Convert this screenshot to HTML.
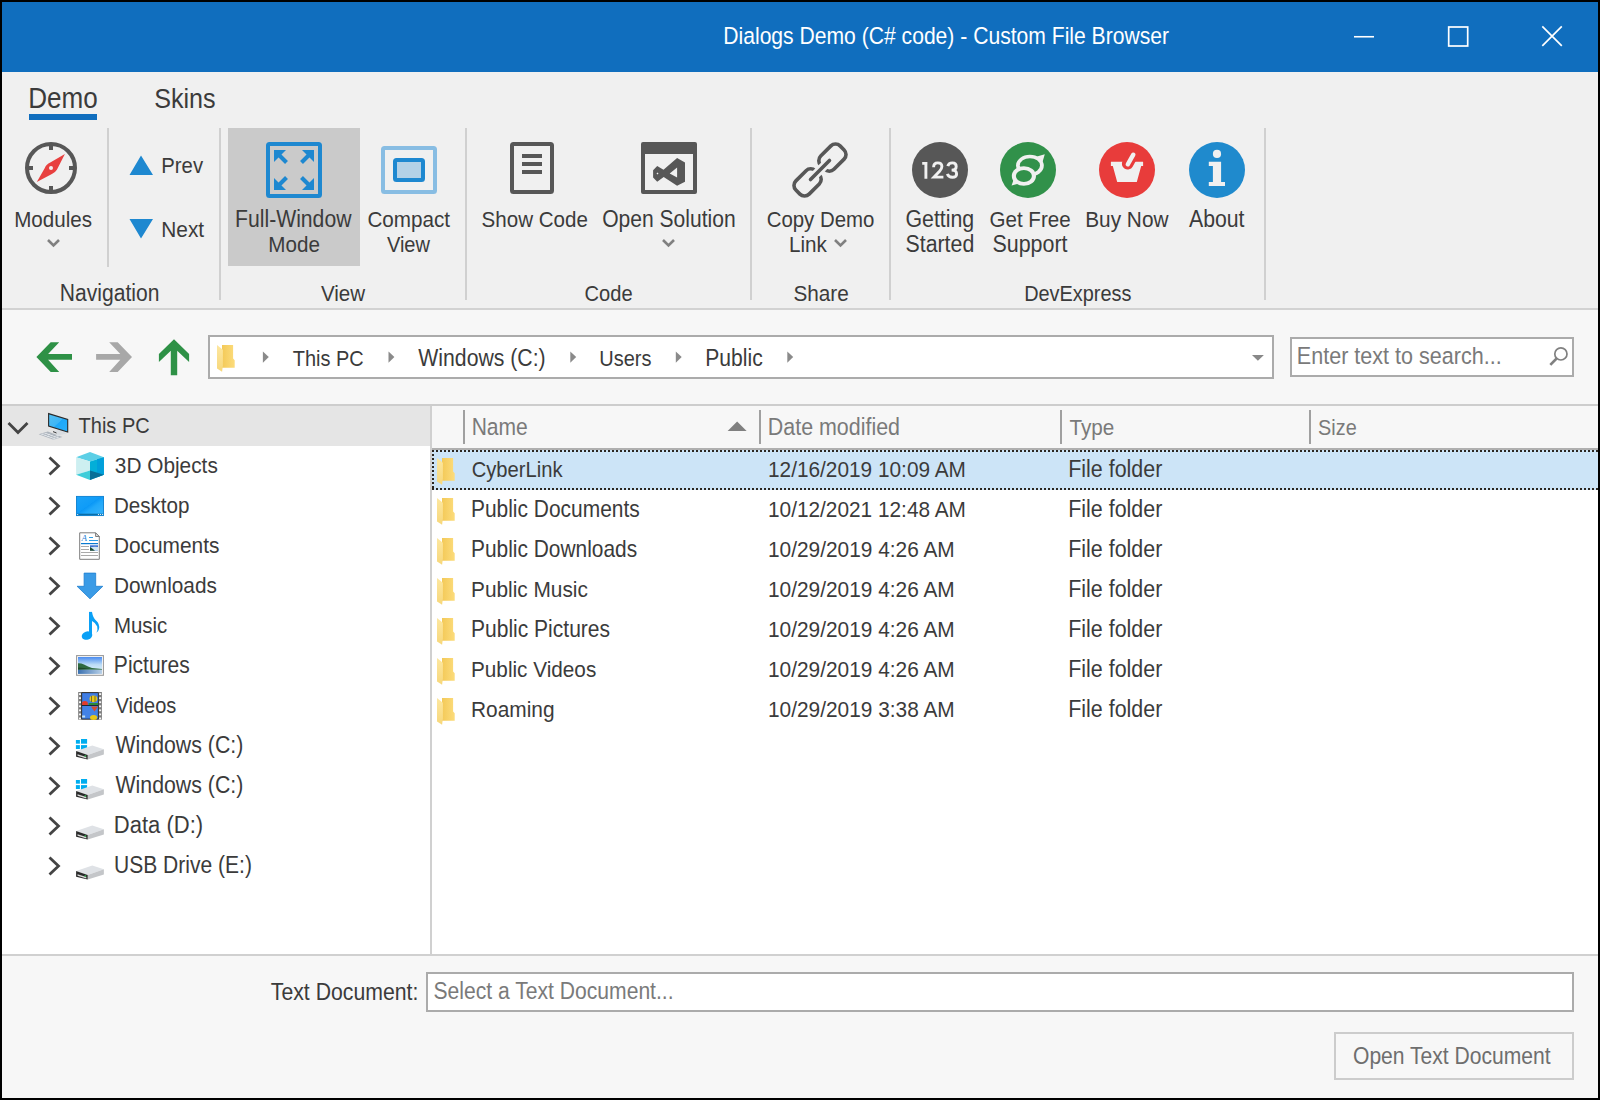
<!DOCTYPE html>
<html><head><meta charset="utf-8"><style>
html,body{margin:0;padding:0;}
body{width:1600px;height:1100px;position:relative;overflow:hidden;background:#000;font-family:"Liberation Sans",sans-serif;}
.t{position:absolute;white-space:nowrap;font-family:"Liberation Sans",sans-serif;}
svg{overflow:visible}
</style></head><body>
<div style="position:absolute;left:2px;top:2px;width:1596px;height:70px;background:#106ebe;"></div>
<div class="t" style="left:723.27px;top:25px;font-size:21.12px;line-height:23px;color:#ffffff;transform:scaleY(1.1);transform-origin:0 19px;">Dialogs Demo (C# code) - Custom File Browser</div>
<div style="position:absolute;left:2px;top:72px;width:1596px;height:236px;background:#f0f0f0;"></div>
<div style="position:absolute;left:2px;top:308px;width:1596px;height:2px;background:#d2d2d2;"></div>
<div class="t" style="left:28.16px;top:84px;font-size:26.07px;line-height:30px;color:#3b3b3b;transform:scaleY(1.1);transform-origin:0 24px;">Demo</div>
<div class="t" style="left:154.16px;top:85px;font-size:25.13px;line-height:28px;color:#3b3b3b;transform:scaleY(1.1);transform-origin:0 23px;">Skins</div>
<div style="position:absolute;left:29px;top:114px;width:68px;height:6px;background:#106ebe;"></div>
<div style="position:absolute;left:107px;top:128px;width:2px;height:139px;background:#d0d0d0;"></div>
<div style="position:absolute;left:219px;top:128px;width:2px;height:172px;background:#d0d0d0;"></div>
<div style="position:absolute;left:465px;top:128px;width:2px;height:172px;background:#d0d0d0;"></div>
<div style="position:absolute;left:750px;top:128px;width:2px;height:172px;background:#d0d0d0;"></div>
<div style="position:absolute;left:889px;top:128px;width:2px;height:172px;background:#d0d0d0;"></div>
<div style="position:absolute;left:1264px;top:128px;width:2px;height:172px;background:#d0d0d0;"></div>
<div style="position:absolute;left:228px;top:128px;width:132px;height:138px;background:#cacaca;"></div>
<div class="t" style="left:14.21px;top:208px;font-size:20.59px;line-height:23px;color:#3b3b3b;transform:scaleY(1.1);transform-origin:0 19px;">Modules</div>
<div class="t" style="left:161.33px;top:155px;font-size:20.30px;line-height:22px;color:#3b3b3b;transform:scaleY(1.1);transform-origin:0 18px;">Prev</div>
<div class="t" style="left:161.29px;top:218px;font-size:20.85px;line-height:23px;color:#3b3b3b;transform:scaleY(1.1);transform-origin:0 19px;">Next</div>
<div class="t" style="left:235.06px;top:208px;font-size:21.16px;line-height:23px;color:#3b3b3b;transform:scaleY(1.1);transform-origin:0 19px;">Full-Window</div>
<div class="t" style="left:268.31px;top:233px;font-size:20.63px;line-height:23px;color:#3b3b3b;transform:scaleY(1.1);transform-origin:0 19px;">Mode</div>
<div class="t" style="left:367.45px;top:208px;font-size:20.67px;line-height:23px;color:#3b3b3b;transform:scaleY(1.1);transform-origin:0 19px;">Compact</div>
<div class="t" style="left:386.91px;top:234px;font-size:20.04px;line-height:22px;color:#3b3b3b;transform:scaleY(1.1);transform-origin:0 18px;">View</div>
<div class="t" style="left:481.57px;top:208px;font-size:20.57px;line-height:23px;color:#3b3b3b;transform:scaleY(1.1);transform-origin:0 19px;">Show Code</div>
<div class="t" style="left:602.20px;top:208px;font-size:21.06px;line-height:23px;color:#3b3b3b;transform:scaleY(1.1);transform-origin:0 19px;">Open Solution</div>
<div class="t" style="left:766.66px;top:209px;font-size:20.42px;line-height:22px;color:#3b3b3b;transform:scaleY(1.1);transform-origin:0 18px;">Copy Demo</div>
<div class="t" style="left:788.90px;top:233px;font-size:20.70px;line-height:23px;color:#3b3b3b;transform:scaleY(1.1);transform-origin:0 19px;">Link</div>
<div class="t" style="left:905.43px;top:208px;font-size:21.35px;line-height:24px;color:#3b3b3b;transform:scaleY(1.1);transform-origin:0 19px;">Getting</div>
<div class="t" style="left:905.53px;top:233px;font-size:21.32px;line-height:24px;color:#3b3b3b;transform:scaleY(1.1);transform-origin:0 19px;">Started</div>
<div class="t" style="left:989.47px;top:208px;font-size:20.57px;line-height:23px;color:#3b3b3b;transform:scaleY(1.1);transform-origin:0 19px;">Get Free</div>
<div class="t" style="left:992.43px;top:233px;font-size:21.45px;line-height:24px;color:#3b3b3b;transform:scaleY(1.1);transform-origin:0 19px;">Support</div>
<div class="t" style="left:1085.19px;top:208px;font-size:20.83px;line-height:23px;color:#3b3b3b;transform:scaleY(1.1);transform-origin:0 19px;">Buy Now</div>
<div class="t" style="left:1188.96px;top:208px;font-size:21.27px;line-height:24px;color:#3b3b3b;transform:scaleY(1.1);transform-origin:0 19px;">About</div>
<div class="t" style="left:59.77px;top:282px;font-size:21.08px;line-height:23px;color:#3b3b3b;transform:scaleY(1.1);transform-origin:0 19px;">Navigation</div>
<div class="t" style="left:320.91px;top:282px;font-size:20.55px;line-height:23px;color:#3b3b3b;transform:scaleY(1.1);transform-origin:0 19px;">View</div>
<div class="t" style="left:584.58px;top:283px;font-size:20.13px;line-height:22px;color:#3b3b3b;transform:scaleY(1.1);transform-origin:0 18px;">Code</div>
<div class="t" style="left:793.46px;top:282px;font-size:20.75px;line-height:23px;color:#3b3b3b;transform:scaleY(1.1);transform-origin:0 19px;">Share</div>
<div class="t" style="left:1024.17px;top:283px;font-size:19.91px;line-height:22px;color:#3b3b3b;transform:scaleY(1.1);transform-origin:0 18px;">DevExpress</div>
<svg style="position:absolute;left:45.5px;top:237.95px" width="15" height="9.5" viewBox="0 0 15 9.5"><path d="M2 2 L7.5 7.5 L13 2" fill="none" stroke="#808080" stroke-width="2.6"/></svg>
<svg style="position:absolute;left:661.2px;top:237.95px" width="15" height="9.5" viewBox="0 0 15 9.5"><path d="M2 2 L7.5 7.5 L13 2" fill="none" stroke="#808080" stroke-width="2.6"/></svg>
<svg style="position:absolute;left:832.7px;top:237.95px" width="15" height="9.5" viewBox="0 0 15 9.5"><path d="M2 2 L7.5 7.5 L13 2" fill="none" stroke="#808080" stroke-width="2.6"/></svg>
<div style="position:absolute;left:2px;top:310px;width:1596px;height:94px;background:#f7f7f7;"></div>
<div style="position:absolute;left:2px;top:404px;width:1596px;height:2px;background:#cdcdcd;"></div>
<div style="position:absolute;left:208px;top:335px;width:1066px;height:44px;box-sizing:border-box;border:2px solid #ababab;background:#fff"></div>
<div style="position:absolute;left:1290px;top:337px;width:284px;height:40px;box-sizing:border-box;border:2px solid #ababab;background:#fff"></div>
<div class="t" style="left:292.75px;top:348px;font-size:19.97px;line-height:22px;color:#3b3b3b;transform:scaleY(1.1);transform-origin:0 18px;">This PC</div>
<div class="t" style="left:418.31px;top:347px;font-size:21.23px;line-height:23px;color:#3b3b3b;transform:scaleY(1.1);transform-origin:0 19px;">Windows (C:)</div>
<div class="t" style="left:599.26px;top:348px;font-size:19.98px;line-height:22px;color:#3b3b3b;transform:scaleY(1.1);transform-origin:0 18px;">Users</div>
<div class="t" style="left:705.27px;top:347px;font-size:21.11px;line-height:23px;color:#3b3b3b;transform:scaleY(1.1);transform-origin:0 19px;">Public</div>
<div class="t" style="left:1296.83px;top:344px;font-size:21.55px;line-height:25px;color:#7a7a7a;transform:scaleY(1.1);transform-origin:0 20px;">Enter text to search...</div>
<div style="position:absolute;left:2px;top:406px;width:428px;height:548px;background:#ffffff;"></div>
<div style="position:absolute;left:2px;top:406px;width:428px;height:40px;background:#e5e5e5;"></div>
<div style="position:absolute;left:430px;top:406px;width:2px;height:548px;background:#d0d0d0;"></div>
<div style="position:absolute;left:432px;top:406px;width:1166px;height:548px;background:#ffffff;"></div>
<div style="position:absolute;left:432px;top:406px;width:1166px;height:42px;background:#f7f7f7;"></div>
<div style="position:absolute;left:432px;top:448px;width:1166px;height:2px;background:#b0b0b0;"></div>
<div style="position:absolute;left:463px;top:410px;width:2px;height:34px;background:#a0a0a0;"></div>
<div style="position:absolute;left:759px;top:410px;width:2px;height:34px;background:#a0a0a0;"></div>
<div style="position:absolute;left:1060px;top:410px;width:2px;height:34px;background:#a0a0a0;"></div>
<div style="position:absolute;left:1309px;top:410px;width:2px;height:34px;background:#a0a0a0;"></div>
<div class="t" style="left:471.67px;top:416px;font-size:21.05px;line-height:23px;color:#7a7a7a;transform:scaleY(1.1);transform-origin:0 19px;">Name</div>
<div class="t" style="left:767.84px;top:416px;font-size:21.43px;line-height:24px;color:#7a7a7a;transform:scaleY(1.1);transform-origin:0 19px;">Date modified</div>
<div class="t" style="left:1069.54px;top:416px;font-size:20.68px;line-height:23px;color:#7a7a7a;transform:scaleY(1.1);transform-origin:0 19px;">Type</div>
<div class="t" style="left:1318.10px;top:417px;font-size:19.83px;line-height:22px;color:#7a7a7a;transform:scaleY(1.1);transform-origin:0 18px;">Size</div>
<div style="position:absolute;left:432px;top:450px;width:1166px;height:40px;background:#cce4f7;"></div>
<div style="position:absolute;left:432px;top:450px;width:1166px;height:2px;background:transparent;background:repeating-linear-gradient(90deg,#2b2620 0 2px,transparent 2px 4px)"></div>
<div style="position:absolute;left:432px;top:488px;width:1166px;height:2px;background:transparent;background:repeating-linear-gradient(90deg,#2b2620 0 2px,transparent 2px 4px)"></div>
<div style="position:absolute;left:432px;top:450px;width:2px;height:40px;background:transparent;background:repeating-linear-gradient(180deg,#2b2620 0 2px,transparent 2px 4px)"></div>
<div class="t" style="left:471.67px;top:459px;font-size:20.19px;line-height:22px;color:#3b3b3b;transform:scaleY(1.1);transform-origin:0 18px;">CyberLink</div>
<div class="t" style="left:768.01px;top:458px;font-size:20.82px;line-height:23px;color:#3b3b3b;transform:scaleY(1.1);transform-origin:0 19px;">12/16/2019 10:09 AM</div>
<div class="t" style="left:1068.24px;top:458px;font-size:21.44px;line-height:24px;color:#3b3b3b;transform:scaleY(1.1);transform-origin:0 19px;">File folder</div>
<div class="t" style="left:470.98px;top:498px;font-size:20.95px;line-height:23px;color:#3b3b3b;transform:scaleY(1.1);transform-origin:0 19px;">Public Documents</div>
<div class="t" style="left:768.01px;top:498px;font-size:20.82px;line-height:23px;color:#3b3b3b;transform:scaleY(1.1);transform-origin:0 19px;">10/12/2021 12:48 AM</div>
<div class="t" style="left:1068.24px;top:498px;font-size:21.44px;line-height:24px;color:#3b3b3b;transform:scaleY(1.1);transform-origin:0 19px;">File folder</div>
<div class="t" style="left:470.99px;top:538px;font-size:20.91px;line-height:23px;color:#3b3b3b;transform:scaleY(1.1);transform-origin:0 19px;">Public Downloads</div>
<div class="t" style="left:768.01px;top:538px;font-size:20.86px;line-height:23px;color:#3b3b3b;transform:scaleY(1.1);transform-origin:0 19px;">10/29/2019 4:26 AM</div>
<div class="t" style="left:1068.24px;top:538px;font-size:21.44px;line-height:24px;color:#3b3b3b;transform:scaleY(1.1);transform-origin:0 19px;">File folder</div>
<div class="t" style="left:470.99px;top:578px;font-size:20.84px;line-height:23px;color:#3b3b3b;transform:scaleY(1.1);transform-origin:0 19px;">Public Music</div>
<div class="t" style="left:768.01px;top:578px;font-size:20.86px;line-height:23px;color:#3b3b3b;transform:scaleY(1.1);transform-origin:0 19px;">10/29/2019 4:26 AM</div>
<div class="t" style="left:1068.24px;top:578px;font-size:21.44px;line-height:24px;color:#3b3b3b;transform:scaleY(1.1);transform-origin:0 19px;">File folder</div>
<div class="t" style="left:470.97px;top:618px;font-size:21.04px;line-height:23px;color:#3b3b3b;transform:scaleY(1.1);transform-origin:0 19px;">Public Pictures</div>
<div class="t" style="left:768.01px;top:618px;font-size:20.86px;line-height:23px;color:#3b3b3b;transform:scaleY(1.1);transform-origin:0 19px;">10/29/2019 4:26 AM</div>
<div class="t" style="left:1068.24px;top:618px;font-size:21.44px;line-height:24px;color:#3b3b3b;transform:scaleY(1.1);transform-origin:0 19px;">File folder</div>
<div class="t" style="left:471.00px;top:658px;font-size:20.74px;line-height:23px;color:#3b3b3b;transform:scaleY(1.1);transform-origin:0 19px;">Public Videos</div>
<div class="t" style="left:768.01px;top:658px;font-size:20.86px;line-height:23px;color:#3b3b3b;transform:scaleY(1.1);transform-origin:0 19px;">10/29/2019 4:26 AM</div>
<div class="t" style="left:1068.24px;top:658px;font-size:21.44px;line-height:24px;color:#3b3b3b;transform:scaleY(1.1);transform-origin:0 19px;">File folder</div>
<div class="t" style="left:470.99px;top:698px;font-size:20.88px;line-height:23px;color:#3b3b3b;transform:scaleY(1.1);transform-origin:0 19px;">Roaming</div>
<div class="t" style="left:768.01px;top:698px;font-size:20.86px;line-height:23px;color:#3b3b3b;transform:scaleY(1.1);transform-origin:0 19px;">10/29/2019 3:38 AM</div>
<div class="t" style="left:1068.24px;top:698px;font-size:21.44px;line-height:24px;color:#3b3b3b;transform:scaleY(1.1);transform-origin:0 19px;">File folder</div>
<div class="t" style="left:78.55px;top:415px;font-size:20.03px;line-height:22px;color:#3b3b3b;transform:scaleY(1.1);transform-origin:0 18px;">This PC</div>
<div class="t" style="left:114.81px;top:454px;font-size:20.83px;line-height:23px;color:#3b3b3b;transform:scaleY(1.1);transform-origin:0 19px;">3D Objects</div>
<div class="t" style="left:113.91px;top:494px;font-size:20.62px;line-height:23px;color:#3b3b3b;transform:scaleY(1.1);transform-origin:0 19px;">Desktop</div>
<div class="t" style="left:113.89px;top:534px;font-size:20.89px;line-height:23px;color:#3b3b3b;transform:scaleY(1.1);transform-origin:0 19px;">Documents</div>
<div class="t" style="left:113.89px;top:574px;font-size:20.83px;line-height:23px;color:#3b3b3b;transform:scaleY(1.1);transform-origin:0 19px;">Downloads</div>
<div class="t" style="left:113.92px;top:614px;font-size:20.46px;line-height:23px;color:#3b3b3b;transform:scaleY(1.1);transform-origin:0 19px;">Music</div>
<div class="t" style="left:113.87px;top:654px;font-size:21.04px;line-height:23px;color:#3b3b3b;transform:scaleY(1.1);transform-origin:0 19px;">Pictures</div>
<div class="t" style="left:115.51px;top:695px;font-size:20.02px;line-height:22px;color:#3b3b3b;transform:scaleY(1.1);transform-origin:0 18px;">Videos</div>
<div class="t" style="left:115.51px;top:734px;font-size:21.30px;line-height:24px;color:#3b3b3b;transform:scaleY(1.1);transform-origin:0 19px;">Windows (C:)</div>
<div class="t" style="left:115.51px;top:774px;font-size:21.30px;line-height:24px;color:#3b3b3b;transform:scaleY(1.1);transform-origin:0 19px;">Windows (C:)</div>
<div class="t" style="left:113.79px;top:813px;font-size:22.03px;line-height:25px;color:#3b3b3b;transform:scaleY(1.1);transform-origin:0 20px;">Data (D:)</div>
<div class="t" style="left:113.98px;top:854px;font-size:21.05px;line-height:23px;color:#3b3b3b;transform:scaleY(1.1);transform-origin:0 19px;">USB Drive (E:)</div>
<div style="position:absolute;left:2px;top:954px;width:1596px;height:2px;background:#d0d0d0;"></div>
<div style="position:absolute;left:2px;top:956px;width:1596px;height:142px;background:#f7f7f7;"></div>
<div class="t" style="left:270.82px;top:981px;font-size:21.24px;line-height:24px;color:#3b3b3b;transform:scaleY(1.1);transform-origin:0 19px;">Text Document:</div>
<div style="position:absolute;left:426px;top:972px;width:1148px;height:40px;box-sizing:border-box;border:2px solid #ababab;background:#fff"></div>
<div class="t" style="left:433.44px;top:980px;font-size:21.11px;line-height:23px;color:#7a7a7a;transform:scaleY(1.1);transform-origin:0 19px;">Select a Text Document...</div>
<div style="position:absolute;left:1334px;top:1032px;width:240px;height:48px;box-sizing:border-box;border:2px solid #cccccc;background:#f7f7f7"></div>
<div class="t" style="left:1353.00px;top:1045px;font-size:21.09px;line-height:23px;color:#6e6e6e;transform:scaleY(1.1);transform-origin:0 19px;">Open Text Document</div>
<svg style="position:absolute;left:0px;top:0px" width="1600" height="1100" viewBox="0 0 1600 1100">
<circle cx="51" cy="168" r="24" fill="none" stroke="#575757" stroke-width="4"/>
<rect x="49" y="144" width="4" height="6" fill="#575757"/><rect x="49" y="186" width="4" height="6" fill="#575757"/>
<rect x="27" y="166" width="6" height="4" fill="#575757"/><rect x="69" y="166" width="6" height="4" fill="#575757"/>
<path d="M64.9 153.9 L50.7 162.2 Q45.6 164.8 44.8 168.1 L36.8 182 L51.9 173.9 Q55.6 172.2 56.9 169.8 Z" fill="#e8403f"/>
<circle cx="51" cy="168" r="2" fill="#f0f0f0"/>
<path d="M141 155.5 L153 175 L129.5 175 Z M129.5 219 L153 219 L141 238.5 Z" fill="#1e88d0"/>
</svg>
<svg style="position:absolute;left:0px;top:0px" width="1600" height="1100" viewBox="0 0 1600 1100">
<rect x="268" y="144" width="52" height="52" rx="1.5" fill="none" stroke="#1e88d0" stroke-width="4"/>
<g fill="#1e88d0">
<path d="M274 150 L286 150 L274 162 Z"/><path d="M314 150 L302 150 L314 162 Z"/>
<path d="M274 190 L286 190 L274 178 Z"/><path d="M314 190 L302 190 L314 178 Z"/>
</g>
<g stroke="#1e88d0" stroke-width="4" stroke-linecap="butt">
<line x1="277" y1="153" x2="286.5" y2="162.5"/><line x1="311" y1="153" x2="301.5" y2="162.5"/>
<line x1="277" y1="187" x2="286.5" y2="177.5"/><line x1="311" y1="187" x2="301.5" y2="177.5"/>
</g>
<rect x="383" y="148" width="52" height="44" rx="1.5" fill="none" stroke="#88bde3" stroke-width="4"/>
<rect x="395" y="160" width="28" height="20" rx="1.5" fill="#b3d1e7" stroke="#1e88d0" stroke-width="4"/>
</svg>
<svg style="position:absolute;left:0px;top:0px" width="1600" height="1100" viewBox="0 0 1600 1100">
<rect x="512" y="144" width="40" height="48" rx="1.5" fill="none" stroke="#575757" stroke-width="4"/>
<rect x="522" y="154" width="20" height="4" fill="#575757"/><rect x="522" y="162" width="20" height="4" fill="#575757"/><rect x="522" y="170" width="20" height="4" fill="#575757"/>
<path fill-rule="evenodd" fill="#575757" d="M643 142 L695 142 Q697 142 697 144 L697 192 Q697 194 695 194 L643 194 Q641 194 641 192 L641 144 Q641 142 643 142 Z M645 154 L645 190 L693 190 L693 154 Z"/>
<path fill-rule="evenodd" fill="#575757" d="M677.1 158 L685 162.4 L685 181.7 L677.1 185.8 L663.7 177.1 L657.2 181.7 L653.1 177.6 L653.1 170.3 L657.2 165.9 L663.5 169.7 Z M677.1 167.6 L669.7 173.4 L677.1 177.6 Z M657.5 172.5 L658.5 173.5 L657.5 174.5 L656.5 173.5 Z"/>
</svg>
<svg style="position:absolute;left:0px;top:0px" width="1600" height="1100" viewBox="0 0 1600 1100">
<g transform="rotate(-45 820 170)">
<rect x="823.85" y="160.65" width="27.4" height="18.7" rx="6.5" fill="none" stroke="#575757" stroke-width="3.6"/>
<rect x="788.75" y="160.65" width="27.4" height="18.7" rx="6.5" fill="none" stroke="#575757" stroke-width="3.6"/>
<line x1="811" y1="170" x2="829" y2="170" stroke="#f0f0f0" stroke-width="8.8"/>
<line x1="806.6" y1="170" x2="833.4" y2="170" stroke="#575757" stroke-width="3.6" stroke-linecap="round"/>
</g>
</svg>
<svg style="position:absolute;left:0px;top:0px" width="1600" height="1100" viewBox="0 0 1600 1100">
<circle cx="940" cy="170" r="28" fill="#575757"/>
<g fill="none" stroke="#f0f0f0" stroke-width="2.9">
<path d="M925.9 161.9 L925.9 178.7 M922.2 163.4 L927.4 163.4"/>
<path d="M933.6 167.2 Q933.6 162.9 937.8 162.9 Q941.9 162.9 941.9 166.6 Q941.9 168.7 939.6 171.2 L934 177.1 L943.4 177.1"/>
<path d="M947.8 166.1 Q948.6 162.9 952.4 162.9 Q956.2 162.9 956.2 166.4 Q956.2 170.1 951.6 170.1 Q956.6 170.1 956.6 173.9 Q956.6 177.2 952.4 177.2 Q948.4 177.2 947.4 173.8"/>
</g>
</svg>
<svg style="position:absolute;left:0px;top:0px" width="1600" height="1100" viewBox="0 0 1600 1100">
<circle cx="1028" cy="170" r="28" fill="#31914a"/>
<ellipse cx="1029.9" cy="165.6" rx="13.9" ry="10.9" fill="#f0f0f0"/>
<path d="M1037 156.5 L1044.8 154.3 L1042.5 162 Z" fill="#f0f0f0"/>
<ellipse cx="1029.9" cy="165.6" rx="10.1" ry="7.4" fill="#31914a"/>
<ellipse cx="1023.9" cy="176" rx="12.1" ry="9.8" fill="#f0f0f0"/>
<path d="M1014.5 177 L1011.6 185.6 L1019 183.5 Z" fill="#f0f0f0"/>
<ellipse cx="1023.9" cy="176" rx="8" ry="6" fill="#31914a"/>
</svg>
<svg style="position:absolute;left:0px;top:0px" width="1600" height="1100" viewBox="0 0 1600 1100">
<circle cx="1127" cy="170" r="28" fill="#e83c3b"/>
<path d="M1110.9 161.8 L1143.1 161.8 L1143.1 165.9 L1141.2 165.9 L1136.8 182 L1117.2 182 L1112.8 165.9 L1110.9 165.9 Z" fill="#f0f0f0"/>
<line x1="1127.6" y1="163.8" x2="1134" y2="152.5" stroke="#e83c3b" stroke-width="11.5" stroke-linecap="round"/>
<line x1="1127.8" y1="164.3" x2="1133.3" y2="154.7" stroke="#f0f0f0" stroke-width="4.4" stroke-linecap="round"/>
</svg>
<svg style="position:absolute;left:0px;top:0px" width="1600" height="1100" viewBox="0 0 1600 1100">
<circle cx="1217" cy="170" r="28" fill="#1f8acd"/>
<circle cx="1217" cy="153.9" r="4.1" fill="#f0f0f0"/>
<path d="M1208.8 161.8 L1221.1 161.8 L1221.1 182 L1225 182 L1225 186.1 L1208.8 186.1 L1208.8 182 L1212.9 182 L1212.9 166.1 L1208.8 166.1 Z" fill="#f0f0f0"/>
</svg>
<svg style="position:absolute;left:0px;top:0px" width="1600" height="1100" viewBox="0 0 1600 1100">
<path d="M36.4 356.9 L50.7 342.2 L59.2 342.2 L48.1 354.1 L72 354.1 L72 359.7 L48.1 359.7 L59.2 372 L50.7 372 Z" fill="#2e9146"/>
<path d="M132 356.9 L117.7 342.2 L109.2 342.2 L120.3 354.1 L96.1 354.1 L96.1 359.7 L120.3 359.7 L109.2 372 L117.7 372 Z" fill="#a8a8a8"/>
<path d="M174 339.25 L189.1 354.1 L189.1 362.1 L177.2 350.7 L177.2 375.2 L170.8 375.2 L170.8 350.7 L158.9 362.1 L158.9 354.1 Z" fill="#2e9146"/>
<path d="M1252 355.1 L1263.9 355.1 L1257.9 360.8 Z" fill="#888"/>
<circle cx="1560.9" cy="353.9" r="6.1" fill="none" stroke="#808080" stroke-width="1.7"/>
<line x1="1556.6" y1="358.5" x2="1550.3" y2="364.8" stroke="#808080" stroke-width="2.6"/>
</svg>
<svg style="position:absolute;left:0px;top:0px" width="1600" height="1100" viewBox="0 0 1600 1100"><path d="M262.9 351.5 L268.79999999999995 357.1 L262.9 362.7 Z" fill="#8a8a8a"/><path d="M388.5 351.5 L394.4 357.1 L388.5 362.7 Z" fill="#8a8a8a"/><path d="M570.3 351.5 L576.1999999999999 357.1 L570.3 362.7 Z" fill="#8a8a8a"/><path d="M675.8 351.5 L681.6999999999999 357.1 L675.8 362.7 Z" fill="#8a8a8a"/><path d="M787.3 351.5 L793.1999999999999 357.1 L787.3 362.7 Z" fill="#8a8a8a"/></svg>
<svg style="position:absolute;left:0px;top:0px" width="1600" height="1100" viewBox="0 0 1600 1100"><defs>
<linearGradient id="fb" x1="0" x2="1" y1="0" y2="0"><stop offset="0" stop-color="#f0c24a"/><stop offset="1" stop-color="#fcdc7c"/></linearGradient>
<linearGradient id="ff" x1="0" x2="0" y1="0" y2="1"><stop offset="0" stop-color="#fde7a0"/><stop offset="1" stop-color="#f7d77a"/></linearGradient>
</defs><g transform="translate(217,345)">
<path d="M0 0 L16.1 0 L16.1 13.5 L17.7 15.2 L17.7 22.8 L5 22.8 L5 0 Z" fill="url(#fb)"/>
<path d="M0 0 L5.9 4.8 L5.9 20.5 L5.1 26.7 L0 23.4 Z" fill="url(#ff)"/>
</g><g transform="translate(437,458)">
<path d="M0 0 L16.1 0 L16.1 13.5 L17.7 15.2 L17.7 22.8 L5 22.8 L5 0 Z" fill="url(#fb)"/>
<path d="M0 0 L5.9 4.8 L5.9 20.5 L5.1 26.7 L0 23.4 Z" fill="url(#ff)"/>
</g><g transform="translate(437,498)">
<path d="M0 0 L16.1 0 L16.1 13.5 L17.7 15.2 L17.7 22.8 L5 22.8 L5 0 Z" fill="url(#fb)"/>
<path d="M0 0 L5.9 4.8 L5.9 20.5 L5.1 26.7 L0 23.4 Z" fill="url(#ff)"/>
</g><g transform="translate(437,538)">
<path d="M0 0 L16.1 0 L16.1 13.5 L17.7 15.2 L17.7 22.8 L5 22.8 L5 0 Z" fill="url(#fb)"/>
<path d="M0 0 L5.9 4.8 L5.9 20.5 L5.1 26.7 L0 23.4 Z" fill="url(#ff)"/>
</g><g transform="translate(437,578)">
<path d="M0 0 L16.1 0 L16.1 13.5 L17.7 15.2 L17.7 22.8 L5 22.8 L5 0 Z" fill="url(#fb)"/>
<path d="M0 0 L5.9 4.8 L5.9 20.5 L5.1 26.7 L0 23.4 Z" fill="url(#ff)"/>
</g><g transform="translate(437,618)">
<path d="M0 0 L16.1 0 L16.1 13.5 L17.7 15.2 L17.7 22.8 L5 22.8 L5 0 Z" fill="url(#fb)"/>
<path d="M0 0 L5.9 4.8 L5.9 20.5 L5.1 26.7 L0 23.4 Z" fill="url(#ff)"/>
</g><g transform="translate(437,658)">
<path d="M0 0 L16.1 0 L16.1 13.5 L17.7 15.2 L17.7 22.8 L5 22.8 L5 0 Z" fill="url(#fb)"/>
<path d="M0 0 L5.9 4.8 L5.9 20.5 L5.1 26.7 L0 23.4 Z" fill="url(#ff)"/>
</g><g transform="translate(437,698)">
<path d="M0 0 L16.1 0 L16.1 13.5 L17.7 15.2 L17.7 22.8 L5 22.8 L5 0 Z" fill="url(#fb)"/>
<path d="M0 0 L5.9 4.8 L5.9 20.5 L5.1 26.7 L0 23.4 Z" fill="url(#ff)"/>
</g></svg>
<svg style="position:absolute;left:0px;top:0px" width="1600" height="1100" viewBox="0 0 1600 1100"><path d="M727.6 431 L746.6 431 L737.1 421.4 Z" fill="#808080"/></svg>
<svg style="position:absolute;left:0px;top:0px" width="1600" height="1100" viewBox="0 0 1600 1100"><path d="M8.5 423 L18 432.5 L27.5 423" fill="none" stroke="#444" stroke-width="2.8"/><path d="M49.5 457.5 L58.5 466 L49.5 474.5" fill="none" stroke="#444" stroke-width="2.8"/><path d="M49.5 497.5 L58.5 506 L49.5 514.5" fill="none" stroke="#444" stroke-width="2.8"/><path d="M49.5 537.5 L58.5 546 L49.5 554.5" fill="none" stroke="#444" stroke-width="2.8"/><path d="M49.5 577.5 L58.5 586 L49.5 594.5" fill="none" stroke="#444" stroke-width="2.8"/><path d="M49.5 617.5 L58.5 626 L49.5 634.5" fill="none" stroke="#444" stroke-width="2.8"/><path d="M49.5 657.5 L58.5 666 L49.5 674.5" fill="none" stroke="#444" stroke-width="2.8"/><path d="M49.5 697.5 L58.5 706 L49.5 714.5" fill="none" stroke="#444" stroke-width="2.8"/><path d="M49.5 737.5 L58.5 746 L49.5 754.5" fill="none" stroke="#444" stroke-width="2.8"/><path d="M49.5 777.5 L58.5 786 L49.5 794.5" fill="none" stroke="#444" stroke-width="2.8"/><path d="M49.5 817.5 L58.5 826 L49.5 834.5" fill="none" stroke="#444" stroke-width="2.8"/><path d="M49.5 857.5 L58.5 866 L49.5 874.5" fill="none" stroke="#444" stroke-width="2.8"/></svg>
<svg style="position:absolute;left:0px;top:0px" width="1600" height="1100" viewBox="0 0 1600 1100"><defs><linearGradient id="sky" x1="0" x2="0" y1="0" y2="1"><stop offset="0" stop-color="#4a8cf0"/><stop offset="0.45" stop-color="#bcdcf6"/><stop offset="1" stop-color="#e6f6f8"/></linearGradient><linearGradient id="wat" x1="0" x2="1" y1="0" y2="0"><stop offset="0" stop-color="#3a70b0"/><stop offset="1" stop-color="#b8d0e8"/></linearGradient></defs>
<g>
<defs><linearGradient id="scr" x1="0" y1="0" x2="1" y2="1"><stop offset="0" stop-color="#55c0f2"/><stop offset="0.5" stop-color="#3db5f5"/><stop offset="0.51" stop-color="#1ea8f8"/><stop offset="1" stop-color="#2ab0fb"/></linearGradient></defs>
<path d="M38.6 434.2 L47.8 431.6 L62.4 437 L53.4 439.8 Z" fill="#aeb5bd"/>
<g fill="#e2e6ea">
<path d="M40.5 434.3 L43 433.6 L45 434.3 L42.5 435 Z"/><path d="M43.8 433.4 L46.3 432.7 L48.3 433.4 L45.8 434.1 Z"/>
<path d="M43.3 435.4 L45.8 434.7 L47.8 435.4 L45.3 436.1 Z"/><path d="M46.6 434.5 L49.1 433.8 L51.1 434.5 L48.6 435.2 Z"/>
<path d="M46.1 436.5 L48.6 435.8 L50.6 436.5 L48.1 437.2 Z"/><path d="M49.4 435.6 L51.9 434.9 L53.9 435.6 L51.4 436.3 Z"/>
<path d="M48.9 437.6 L51.4 436.9 L53.4 437.6 L50.9 438.3 Z"/><path d="M52.2 436.7 L54.7 436 L56.7 436.7 L54.2 437.4 Z"/>
<path d="M55.5 435.8 L58 435.1 L60 435.8 L57.5 436.5 Z"/><path d="M51.7 438.7 L54.2 438 L56.2 438.7 L53.7 439.4 Z"/>
<path d="M55 437.8 L57.5 437.1 L59.5 437.8 L57 438.5 Z"/>
</g>
<path d="M53 431.4 L60.5 429.6 L66.8 433.4 L58.3 435.4 Z" fill="#d8dce0"/>
<path d="M53 431.6 L56.5 433" stroke="#3a3a3a" stroke-width="1"/>
<path d="M48.6 413.6 L67.7 419.4 L67.7 432 L48.6 426 Z" fill="url(#scr)" stroke="#2b2b2b" stroke-width="1.1"/>
</g>
<path d="M90 452.1 L103.9 457.2 L90 461.4 L76.1 457.2 Z" fill="#5ccfe6"/>
<path d="M76.1 457.2 L90 461.4 L90 470.6 L76.1 474.8 Z" fill="#cdeff1"/>
<path d="M90 461.4 L103.9 457.2 L103.9 474.8 L90 479.9 Z" fill="#03aed8"/>
<path d="M97 459.2 L103.9 457.2 L103.9 474.8 L97 477.3 Z" fill="#019fda"/>
<path d="M76.1 474.8 L90 470.6 L90 479.9 Z" fill="#3fcdd9"/>
<path d="M90 470.6 L103.9 474.8 L90 479.9 Z" fill="#086f98"/>
<defs><linearGradient id="dsk" x1="0" y1="0" x2="1" y2="1"><stop offset="0" stop-color="#1ba3f8"/><stop offset="0.45" stop-color="#0f9cf8"/><stop offset="0.46" stop-color="#0a97f6"/><stop offset="0.6" stop-color="#20a8fa"/><stop offset="1" stop-color="#3ab4fa"/></linearGradient></defs>
<rect x="76.5" y="496.4" width="27" height="19.2" fill="url(#dsk)" stroke="#0b7fd0" stroke-width="0.9"/>
<rect x="77" y="513.7" width="26" height="1.5" fill="#0a6ea8"/>
<circle cx="77.7" cy="514.5" r="0.6" fill="#fff"/><circle cx="98.5" cy="514.5" r="0.6" fill="#fff"/><circle cx="100.5" cy="514.5" r="0.6" fill="#fff"/><circle cx="102.5" cy="514.5" r="0.6" fill="#fff"/>
<path d="M79.7 532.8 L95.6 532.8 L99.3 536.5 L99.3 559.3 L79.7 559.3 Z" fill="#fff" stroke="#7d7d7d" stroke-width="1"/>
<path d="M95.6 532.8 L95.6 536.5 L99.3 536.5 Z" fill="#e6e6e6" stroke="#7d7d7d" stroke-width="1"/>
<text x="81.5" y="541" font-family="Liberation Serif" font-style="italic" font-size="9" fill="#1e7fd6">A</text>
<rect x="89" y="537" width="4" height="1" fill="#2f9ee6"/><rect x="89" y="540" width="9" height="1" fill="#2f9ee6"/>
<rect x="81" y="543" width="17" height="1.2" fill="#0a7bd2"/>
<rect x="81" y="546" width="8" height="1" fill="#aaa"/><rect x="81" y="549" width="8" height="1" fill="#aaa"/>
<rect x="90" y="545.3" width="8" height="5.5" fill="#3a6fd0"/>
<path d="M90 547.5 Q93 546.5 98 547 L98 550.8 L90 550.8 Z" fill="#cfe6f4"/>
<path d="M90 547 Q92 548 95 550.8 L90 550.8 Z" fill="#1f4a30"/>
<rect x="81" y="552" width="17" height="1" fill="#aaa"/><rect x="81" y="555" width="17" height="1" fill="#aaa"/>
<path d="M84.1 573.1 L95.7 573.1 L95.7 586.3 L102.8 586.3 L90 598.8 L77.1 586.3 L84.1 586.3 Z" fill="#3a9be6" stroke="#1e7fd0" stroke-width="0.8"/>
<rect x="89" y="611.9" width="3" height="24" fill="#0aa0f6"/>
<path d="M92 612 Q93 618 96 620.5 Q100 624 99 629 Q98.5 631.5 96.4 632.8 Q98 629.5 97.2 626.5 Q96 623 92 621 Z" fill="#0aa0f6"/>
<ellipse cx="87" cy="635.6" rx="5.4" ry="4.1" transform="rotate(-18 87 635.6)" fill="#0aa0f6"/>
<rect x="76.6" y="655.6" width="26.8" height="19.7" fill="#fff" stroke="#9a9a9a" stroke-width="1.1"/>
<rect x="78" y="657" width="24" height="16.9" fill="url(#sky)"/>
<path d="M78 663.2 Q81 663 84 664.5 Q88 666.5 92 668 L102 669 L102 669.8 L78 669.8 Z" fill="#2f6a40"/>
<path d="M78 667.5 Q84 667.5 90 669 L78 669.8 Z" fill="#1f4a2a"/>
<rect x="78" y="669.8" width="24" height="4.1" fill="url(#wat)"/>
<rect x="78.2" y="692" width="23.7" height="27.7" fill="#7c7c7c"/>
<rect x="81.4" y="692.4" width="17.2" height="27" fill="#111"/>
<rect x="82.1" y="693.1" width="15.8" height="11.9" fill="#3f7de4"/>
<rect x="82.1" y="705.8" width="15.8" height="12.9" fill="#4282e6"/>
<ellipse cx="93.4" cy="698.8" rx="3.9" ry="3.4" fill="#e8c818"/>
<path d="M91.5 696 L91.5 702 M95 696 L95 702" stroke="#333" stroke-width="0.6"/>
<rect x="88.6" y="703" width="9.3" height="2" fill="#2a8a3a"/>
<path d="M82.1 702 Q85 700 87.5 702 L88 705 L82.1 705 Z" fill="#e23b2a"/>
<path d="M91 706.5 L97.9 706.5 L94.5 711.5 Z" fill="#d84a2a"/>
<ellipse cx="93.6" cy="717.5" rx="3.6" ry="2.5" fill="#e8c818"/>
<rect x="82.1" y="715.5" width="3" height="2" fill="#bfe0f0"/>
<rect x="79" y="693.2" width="2" height="1.8" fill="#f4f4f4"/><rect x="99.1" y="693.2" width="2" height="1.8" fill="#f4f4f4"/><rect x="79" y="697.2" width="2" height="1.8" fill="#f4f4f4"/><rect x="99.1" y="697.2" width="2" height="1.8" fill="#f4f4f4"/><rect x="79" y="701.3" width="2" height="1.8" fill="#f4f4f4"/><rect x="99.1" y="701.3" width="2" height="1.8" fill="#f4f4f4"/><rect x="79" y="705.4" width="2" height="1.8" fill="#f4f4f4"/><rect x="99.1" y="705.4" width="2" height="1.8" fill="#f4f4f4"/><rect x="79" y="709.4" width="2" height="1.8" fill="#f4f4f4"/><rect x="99.1" y="709.4" width="2" height="1.8" fill="#f4f4f4"/><rect x="79" y="713.5" width="2" height="1.8" fill="#f4f4f4"/><rect x="99.1" y="713.5" width="2" height="1.8" fill="#f4f4f4"/><rect x="79" y="717.5" width="2" height="1.8" fill="#f4f4f4"/><rect x="99.1" y="717.5" width="2" height="1.8" fill="#f4f4f4"/><g fill="#00adef"><rect x="75.9" y="740" width="4" height="3.7"/><rect x="81" y="739" width="6.1" height="4.7"/><rect x="75.9" y="745.1" width="4" height="3.9"/><rect x="81" y="745.1" width="6.1" height="4.9"/></g><path d="M76.1 751 L92.3 745.4 L103.9 749.3 L87.7 754.9 Z" fill="#dfe2e6"/>
<path d="M87.7 754.9 L103.9 749.3 L103.9 754.5 L87.7 759.5 Z" fill="#c4c6c9"/>
<path d="M76.1 751 L87.7 754.9 L87.7 759.5 L76.1 756.8 Z" fill="#2a2a2a"/>
<path d="M77.5 754.2 L86.3 757 L86.3 758.4 L77.5 755.8 Z" fill="#d9d9d9"/>
<rect x="84.5" y="755.4" width="1.6" height="1.2" fill="#2ed05a"/><g fill="#00adef"><rect x="75.9" y="780" width="4" height="3.7"/><rect x="81" y="779" width="6.1" height="4.7"/><rect x="75.9" y="785.1" width="4" height="3.9"/><rect x="81" y="785.1" width="6.1" height="4.9"/></g><path d="M76.1 791 L92.3 785.4 L103.9 789.3 L87.7 794.9 Z" fill="#dfe2e6"/>
<path d="M87.7 794.9 L103.9 789.3 L103.9 794.5 L87.7 799.5 Z" fill="#c4c6c9"/>
<path d="M76.1 791 L87.7 794.9 L87.7 799.5 L76.1 796.8 Z" fill="#2a2a2a"/>
<path d="M77.5 794.2 L86.3 797 L86.3 798.4 L77.5 795.8 Z" fill="#d9d9d9"/>
<rect x="84.5" y="795.4" width="1.6" height="1.2" fill="#2ed05a"/><path d="M76.1 831 L92.3 825.4 L103.9 829.3 L87.7 834.9 Z" fill="#dfe2e6"/>
<path d="M87.7 834.9 L103.9 829.3 L103.9 834.5 L87.7 839.5 Z" fill="#c4c6c9"/>
<path d="M76.1 831 L87.7 834.9 L87.7 839.5 L76.1 836.8 Z" fill="#2a2a2a"/>
<path d="M77.5 834.2 L86.3 837 L86.3 838.4 L77.5 835.8 Z" fill="#d9d9d9"/>
<rect x="84.5" y="835.4" width="1.6" height="1.2" fill="#2ed05a"/><path d="M76.1 871 L92.3 865.4 L103.9 869.3 L87.7 874.9 Z" fill="#dfe2e6"/>
<path d="M87.7 874.9 L103.9 869.3 L103.9 874.5 L87.7 879.5 Z" fill="#c4c6c9"/>
<path d="M76.1 871 L87.7 874.9 L87.7 879.5 L76.1 876.8 Z" fill="#2a2a2a"/>
<path d="M77.5 874.2 L86.3 877 L86.3 878.4 L77.5 875.8 Z" fill="#d9d9d9"/>
<rect x="84.5" y="875.4" width="1.6" height="1.2" fill="#2ed05a"/></svg>
<svg style="position:absolute;left:0px;top:0px" width="1600" height="1100" viewBox="0 0 1600 1100">
<line x1="1354" y1="36.75" x2="1374" y2="36.75" stroke="#fff" stroke-width="1.6"/>
<rect x="1448.7" y="27" width="19" height="19" fill="none" stroke="#fff" stroke-width="1.7"/>
<path d="M1542.3 26.3 L1561.8 45.8 M1561.8 26.3 L1542.3 45.8" stroke="#fff" stroke-width="1.7" fill="none"/>
</svg>

</body></html>
